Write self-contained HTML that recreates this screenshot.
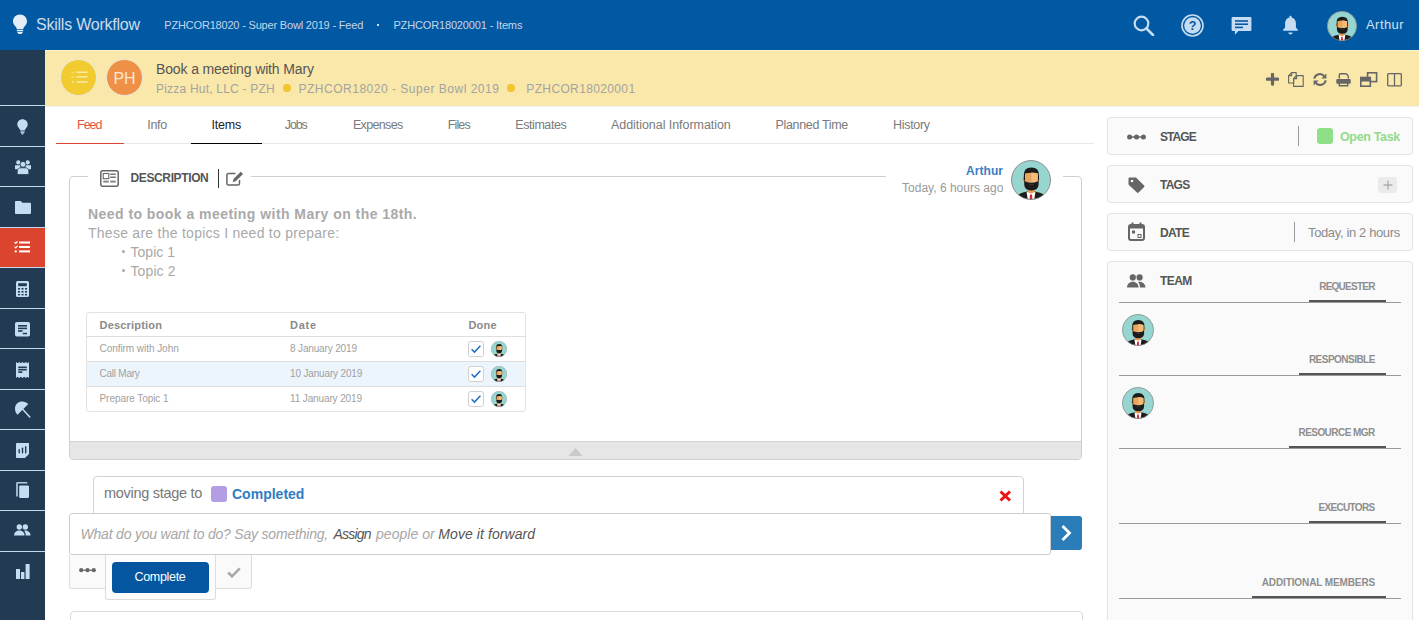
<!DOCTYPE html><html><head><meta charset="utf-8">
<style>
*{box-sizing:border-box;margin:0;padding:0}
html,body{width:1419px;height:620px;overflow:hidden;background:#fff;font-family:"Liberation Sans",sans-serif;position:relative}
.a{position:absolute;white-space:nowrap}
#top{left:0;top:0;width:1419px;height:50px;background:#0259a3}
#side{left:0;top:50px;width:45px;height:570px;background:#223b53}
.sep{position:absolute;left:0;width:45px;height:1px;background:#c3d9ee}
.sicon{position:absolute;left:0;width:45px;display:flex;align-items:center;justify-content:center}
#band{left:45px;top:50px;width:1374px;height:56px;background:#f9e8a9}
.tab{position:absolute;top:119.2px;font-size:12.5px;line-height:12.5px;color:#7a7a7a;white-space:nowrap}
.rbox{position:absolute;left:1107px;width:306px;background:#fafafa;border:1px solid #e3e3e3;border-radius:3px}
.lbl{position:absolute;font-size:12px;font-weight:bold;color:#555;white-space:nowrap}
.tl{position:absolute;font-weight:bold;color:#8e8e8e;white-space:nowrap}
</style></head><body>

<svg width="0" height="0" style="position:absolute">
<defs>
<symbol id="av" viewBox="0 0 100 100">
<clipPath id="avc"><circle cx="50" cy="50" r="49"></circle></clipPath>
<circle cx="50" cy="50" r="49" fill="#97d6d0"></circle>
<g clip-path="url(#avc)">
<path d="M12 100 Q14 86 28 82 L40 79 L60 79 L72 82 Q86 86 88 100 Z" fill="#1c1c1c"></path>
<path d="M39 80 L61 80 L58 100 L42 100 Z" fill="#fff"></path>
<path d="M47.5 86 L52.5 86 L53.5 100 L46.5 100 Z" fill="#d4283a"></path>
<path d="M41 68 L59 68 L59 80 Q50 86 41 80 Z" fill="#e29a55"></path>
<ellipse cx="32" cy="48" rx="3.2" ry="5.5" fill="#e49e5a"></ellipse>
<ellipse cx="70" cy="48" rx="3.2" ry="5.5" fill="#f0b26e"></ellipse>
<path d="M32 40 Q31 19 51 19 Q71 19 70 40 L70 50 L32 50 Z" fill="#1c1c1c"></path>
<path d="M35 34 Q51 30 67 34 L67 56 L35 56 Z" fill="#eba65e"></path>
<path d="M51 31.5 Q59 32 67 34 L67 56 L51 56 Z" fill="#f5bb78"></path>
<path d="M33 48 L36 54 Q51 60 66 54 L69 48 L69 62 Q68 76 51 76 Q34 76 33 62 Z" fill="#1c1c1c"></path>
<path d="M45 62 Q51 59.5 57 62" stroke="#6b4a2c" stroke-width="1.5" fill="none"></path>
</g>
<circle cx="50" cy="50" r="48.6" fill="none" stroke="#8a8a8a" stroke-width="2.3"></circle>
</symbol>
</defs>
</svg>

<!-- TOP BAR -->
<div id="top" class="a"></div>
<svg class="a" style="left:12px;top:14px" width="16" height="20" viewBox="0 0 16 20"><path d="M8 0.5C3.8 0.5 1 3.6 1 7.2c0 2.5 1.3 4 2.5 5.3.8.9 1.2 1.8 1.3 2.7h6.4c.1-.9.5-1.8 1.3-2.7 1.2-1.3 2.5-2.8 2.5-5.3C15 3.6 12.2.5 8 .5z" fill="#e3edf7"></path><rect x="4.8" y="16" width="6.4" height="1.3" fill="#e3edf7"></rect><path d="M5 18h6l-1.5 2h-3z" fill="#e3edf7"></path></svg>
<div class="a" style="left: 36px; top: 16.9px; font-size: 16px; line-height: 16px; color: rgb(205, 220, 236); letter-spacing: -0.234px;">Skills Workflow</div>
<div class="a" style="left: 164.3px; top: 19.9px; font-size: 11px; line-height: 11px; color: rgb(196, 214, 233); letter-spacing: -0.184px;">PZHCOR18020 - Super Bowl 2019 - Feed</div>
<div class="a" style="left:376.5px;top:24px;width:2px;height:2px;background:#cfdeed"></div>
<div class="a" style="left: 393.4px; top: 19.9px; font-size: 11px; line-height: 11px; color: rgb(196, 214, 233); letter-spacing: -0.146px;">PZHCOR18020001 - Items</div>
<!-- top right icons -->
<svg class="a" style="left:1133px;top:15px" width="22" height="21" viewBox="0 0 22 21"><circle cx="8.5" cy="8.5" r="6.8" fill="none" stroke="#c6dcf2" stroke-width="2.2"></circle><path d="M13.5 13.5L20 20" stroke="#c6dcf2" stroke-width="2.6" stroke-linecap="round"></path></svg>
<svg class="a" style="left:1181px;top:14px" width="23" height="23" viewBox="0 0 23 23"><circle cx="11.5" cy="11.5" r="10.5" fill="none" stroke="#c6dcf2" stroke-width="1.6"></circle><circle cx="11.5" cy="11.5" r="8.3" fill="#c6dcf2"></circle><text x="11.5" y="16" font-family="Liberation Sans" font-weight="bold" font-size="12.5" fill="#0558a2" text-anchor="middle">?</text></svg>
<svg class="a" style="left:1231px;top:16px" width="21" height="20" viewBox="0 0 21 20"><path d="M1.5 1h18c.5 0 .9.4.9.9v12.2c0 .5-.4.9-.9.9H7.5l-3.6 3.8V15H1.5c-.5 0-.9-.4-.9-.9V1.9c0-.5.4-.9.9-.9z" fill="#c6dcf2"></path><rect x="4" y="4.2" width="13" height="1.6" fill="#0558a2"></rect><rect x="4" y="7.4" width="13" height="1.6" fill="#0558a2"></rect><rect x="4" y="10.6" width="8" height="1.6" fill="#0558a2"></rect></svg>
<svg class="a" style="left:1282px;top:15px" width="17" height="20" viewBox="0 0 17 20"><path d="M8.5 .8c.7 0 1.1.5 1.1 1.1v.6c2.6.6 4.3 2.8 4.3 5.6v4.5l2 2.2v1H1.1v-1l2-2.2V8.1c0-2.8 1.7-5 4.3-5.6v-.6C7.4 1.3 7.8.8 8.5.8z" fill="#c6dcf2"></path><path d="M6.3 17.6h4.4c0 1.1-1 1.8-2.2 1.8s-2.2-.7-2.2-1.8z" fill="#c6dcf2"></path></svg>
<svg class="a" style="left:1327px;top:11px" width="30" height="30"><use href="#av"></use></svg>
<div class="a" style="left: 1366px; top: 18px; font-size: 13px; line-height: 13px; color: rgb(211, 225, 239); letter-spacing: 0.439px;">Arthur</div>

<!-- SIDEBAR -->
<div id="side" class="a"></div>
<div class="a" style="left:0;top:227px;width:45px;height:40px;background:#db442e"></div>
<div class="sep" style="top:105px"></div>
<div class="sep" style="top:145.5px"></div>
<div class="sep" style="top:186px"></div>
<div class="sep" style="top:226.5px"></div>
<div class="sep" style="top:267px"></div>
<div class="sep" style="top:307.5px"></div>
<div class="sep" style="top:348px"></div>
<div class="sep" style="top:388.5px"></div>
<div class="sep" style="top:429px"></div>
<div class="sep" style="top:469.5px"></div>
<div class="sep" style="top:510px"></div>
<div class="sep" style="top:550.5px"></div>

<div id="band" class="a"></div>
<div class="a" style="left:45px;top:50px;width:1374px;height:1px;background:#fdf3cf"></div>
<div class="a" style="left:45px;top:106px;width:1374px;height:1px;background:#eef0f3"></div>

<!-- SIDEBAR ICONS -->
<svg class="a" style="left:17px;top:119px" width="11" height="16" viewBox="0 0 11 16"><path d="M5.5 .3C2.6.3.3 2.5.3 5.3c0 1.9 1 3.1 1.9 4.1.6.7.9 1.4 1 2.1h4.6c.1-.7.4-1.4 1-2.1.9-1 1.9-2.2 1.9-4.1C10.7 2.5 8.4.3 5.5.3z" fill="#c6dcf2"></path><path d="M3.3 12.2h4.4l-.3 1.6-1.9 2.1-1.9-2.1z" fill="#a9c3dc"></path></svg>
<svg class="a" style="left:15px;top:160px" width="16" height="15" viewBox="0 0 16 15"><circle cx="3.3" cy="2.4" r="2.1" fill="#c6dcf2"></circle><circle cx="12.7" cy="2.4" r="2.1" fill="#c6dcf2"></circle><path d="M0 5.2h5.2l.4 4.1H0z" fill="#c6dcf2"></path><path d="M10.4 5.2H16v4.1h-5.6z" fill="#c6dcf2"></path><circle cx="8" cy="4.3" r="2.9" fill="#c6dcf2" stroke="#223b53" stroke-width=".8"></circle><path d="M2.2 14.5v-3.5c0-1.9 1.6-3.2 3.2-3.2h5.2c1.6 0 3.2 1.3 3.2 3.2v3.5z" fill="#c6dcf2" stroke="#223b53" stroke-width=".8"></path></svg>
<svg class="a" style="left:15px;top:201px" width="16" height="13" viewBox="0 0 16 13"><path d="M.8 0h5l1.5 1.8h7.8c.5 0 .9.4.9.9v9.4c0 .5-.4.9-.9.9H.8c-.5 0-.8-.4-.8-.9V.9C0 .4.3 0 .8 0z" fill="#c6dcf2"></path></svg>
<svg class="a" style="left:14px;top:241px" width="16" height="12" viewBox="0 0 16 12"><path d="M.5 1.2l1.2 1.2L3.6.3" stroke="#fff" stroke-width="1.1" fill="none"></path><path d="M.5 5.7l1.2 1.2 1.9-2.1" stroke="#fff" stroke-width="1.1" fill="none"></path><rect x=".7" y="9.4" width="2" height="2" fill="#fff"></rect><rect x="5" y=".5" width="11" height="2" fill="#fff"></rect><rect x="5" y="5" width="11" height="2" fill="#fff"></rect><rect x="5" y="9.4" width="11" height="2" fill="#fff"></rect></svg>
<svg class="a" style="left:16px;top:281px" width="13" height="16" viewBox="0 0 13 16"><rect x="0" y="0" width="13" height="16" rx="1.5" fill="#c6dcf2"></rect><rect x="2.2" y="2.2" width="8.6" height="3" fill="#223b53"></rect><g fill="#223b53"><rect x="2" y="7" width="2" height="1.6"></rect><rect x="5.5" y="7" width="2" height="1.6"></rect><rect x="9" y="7" width="2" height="1.6"></rect><rect x="2" y="10" width="2" height="1.6"></rect><rect x="5.5" y="10" width="2" height="1.6"></rect><rect x="9" y="10" width="2" height="1.6"></rect><rect x="2" y="13" width="2" height="1.4"></rect><rect x="5.5" y="13" width="2" height="1.4"></rect><rect x="9" y="13" width="2" height="1.4"></rect></g></svg>
<svg class="a" style="left:15px;top:322px" width="15" height="15" viewBox="0 0 15 15"><rect width="15" height="14.5" rx="1.8" fill="#c6dcf2"></rect><rect x="3" y="3" width="9" height="1.6" fill="#223b53"></rect><rect x="3" y="5.6" width="9" height="1.6" fill="#223b53"></rect><rect x="3" y="8.2" width="4.5" height="1.6" fill="#223b53"></rect><rect x="7.8" y="10.8" width="4.2" height="1.5" fill="#223b53"></rect></svg>
<svg class="a" style="left:16px;top:362px" width="13" height="16" viewBox="0 0 13 16"><path d="M0 0l1.6 1.2L3.2 0l1.6 1.2L6.5 0l1.6 1.2L9.8 0l1.6 1.2L13 0v16l-1.6-1.2L9.8 16l-1.6-1.2L6.5 16l-1.6-1.2L3.2 16l-1.6-1.2L0 16z" fill="#c6dcf2"></path><rect x="2.2" y="4.5" width="8.6" height="1.6" fill="#223b53"></rect><rect x="2.2" y="6.9" width="8.6" height="1.6" fill="#223b53"></rect><rect x="2.2" y="9.3" width="4.2" height="1.6" fill="#223b53"></rect></svg>
<svg class="a" style="left:14px;top:400px" width="18" height="19" viewBox="0 0 18 19"><path d="M3.5 14.8C.3 11.5.2 6 3.2 3.3 6.2.6 11.3.8 14.3 4.1z" fill="#c6dcf2"></path><path d="M8.9 9.6l6.9 7.4" stroke="#c6dcf2" stroke-width="1.5" stroke-linecap="round"></path></svg>
<svg class="a" style="left:16px;top:443px" width="13" height="15" viewBox="0 0 13 15"><path d="M.8 0h12.2v11L9 15H.8c-.5 0-.8-.4-.8-.8V.8C0 .4.3 0 .8 0z" fill="#c6dcf2"></path><rect x="2.5" y="6" width="1.4" height="4.5" rx=".7" fill="#223b53"></rect><rect x="5.8" y="4.5" width="1.4" height="6" rx=".7" fill="#223b53"></rect><rect x="9" y="3" width="1.4" height="7.5" rx=".7" fill="#223b53"></rect></svg>
<svg class="a" style="left:16px;top:482px" width="13" height="16" viewBox="0 0 13 16"><path d="M1 14.5V1.5C1 1 1.3.7 1.8.7h9.5" stroke="#b5cbe1" stroke-width="1.7" fill="none"></path><rect x="3.2" y="3.4" width="9.8" height="12.5" rx="1.2" fill="#c6dcf2"></rect></svg>
<svg class="a" style="left:14px;top:524px" width="17" height="12" viewBox="0 0 17 12"><circle cx="5.3" cy="3" r="2.7" fill="#c6dcf2"></circle><circle cx="11.3" cy="3" r="2.7" fill="#c6dcf2"></circle><path d="M0 11.5c0-3 2.4-5 5.3-5s5.3 2 5.3 5z" fill="#c6dcf2"></path><path d="M11 6.5c3 0 5.6 2 5.6 5h-4.8c0-2-.5-3.5-1.6-4.5z" fill="#c6dcf2"></path></svg>
<svg class="a" style="left:16px;top:564px" width="14" height="15" viewBox="0 0 14 15"><rect x="0" y="5" width="4" height="10" fill="#c6dcf2"></rect><rect x="5" y="8" width="3.4" height="7" fill="#c6dcf2"></rect><rect x="9.6" y="0" width="4" height="15" fill="#c6dcf2"></rect></svg>

<!-- BAND -->
<div class="a" style="left:60px;top:59px;width:37px;height:37px;border-radius:50%;background:#f2cb31;border:1.5px solid #ece9d8"></div>
<svg class="a" style="left:70.5px;top:71px" width="18" height="12" viewBox="0 0 18 12"><path d="M.6 1.2l1 1 1.6-1.8" stroke="#fbeaa8" stroke-width="1" fill="none"></path><path d="M.6 5.8l1 1 1.6-1.8" stroke="#fbeaa8" stroke-width="1" fill="none"></path><rect x=".9" y="10" width="1.6" height="1.6" fill="#fbeaa8"></rect><rect x="5.5" y=".5" width="11" height="1.5" fill="#fbeaa8"></rect><rect x="5.5" y="5.1" width="11" height="1.5" fill="#fbeaa8"></rect><rect x="5.5" y="10.2" width="11" height="1.5" fill="#fbeaa8"></rect></svg>
<div class="a" style="left:106px;top:59px;width:37px;height:37px;border-radius:50%;background:#ee9147;border:1.5px solid #ece9d8"></div>
<div class="a" style="left:106px;top:70.5px;width:36px;text-align:center;font-size:16px;line-height:16px;color:#fde6d0;padding-left:1px">PH</div>
<div class="a" style="left: 156px; top: 62px; font-size: 14px; line-height: 14px; color: rgb(85, 85, 85); letter-spacing: -0.134px;">Book a meeting with Mary</div>
<div class="a" style="left: 156px; top: 82.6px; font-size: 12px; line-height: 12px; color: rgb(163, 163, 163); letter-spacing: 0.21px;">Pizza Hut, LLC - PZH</div>
<div class="a" style="left:282.6px;top:84px;width:8px;height:8px;border-radius:50%;background:#f2c52e"></div>
<div class="a" style="left: 298.5px; top: 82.6px; font-size: 12px; line-height: 12px; color: rgb(163, 163, 163); letter-spacing: 0.511px;">PZHCOR18020 - Super Bowl 2019</div>
<div class="a" style="left:506.8px;top:84px;width:8px;height:8px;border-radius:50%;background:#f2c52e"></div>
<div class="a" style="left: 526.3px; top: 82.6px; font-size: 12px; line-height: 12px; color: rgb(163, 163, 163); letter-spacing: 0.364px;">PZHCOR18020001</div>
<!-- band right icons -->
<svg class="a" style="left:1266px;top:73px" width="13" height="12.5" viewBox="0 0 13 12.5"><path d="M6.5 1.2v10M1.3 6.2h10.4" stroke="#666" stroke-width="3.2" stroke-linecap="round"></path></svg>
<svg class="a" style="left:1287.5px;top:72px" width="16" height="15" viewBox="0 0 16 15"><path d="M3.6.6h4.6v3.3L5.6 6.6v4.4H.6V3.6z" fill="none" stroke="#666" stroke-width="1.1" stroke-linejoin="round"></path><path d="M.6 3.6h3V.6" fill="none" stroke="#666" stroke-width="1.1"></path><path d="M8.6 3.6h6.6v10.8H5.6V6.6z" fill="none" stroke="#666" stroke-width="1.1" stroke-linejoin="round"></path><path d="M5.6 6.6h3v-3" fill="none" stroke="#666" stroke-width="1.1"></path></svg>
<svg class="a" style="left:1312.5px;top:73px" width="14" height="13" viewBox="0 0 14 13"><path d="M1.3 5.6A5.6 5.6 0 0 1 11.2 3.2" fill="none" stroke="#666" stroke-width="2"></path><path d="M13.4.6v5h-5z" fill="#666"></path><path d="M12.7 7.4A5.6 5.6 0 0 1 2.8 9.8" fill="none" stroke="#666" stroke-width="2"></path><path d="M.6 12.4v-5h5z" fill="#666"></path></svg>
<svg class="a" style="left:1335.5px;top:72.5px" width="15" height="14" viewBox="0 0 15 14"><path d="M3.3 5.5V1.8C3.3 1.1 3.8.7 4.4.7h4.8c.7 0 1.2.2 1.6.6l.9.9c.4.4.6.9.6 1.5V5.5" fill="none" stroke="#666" stroke-width="1.4"></path><rect x=".3" y="6" width="14.4" height="4.8" rx="1" fill="#666"></rect><path d="M3.3 10v2.8h8.4V10" fill="none" stroke="#666" stroke-width="1.4"></path></svg>
<svg class="a" style="left:1360px;top:72px" width="17.5" height="15" viewBox="0 0 17.5 15"><rect x="7.6" y=".8" width="9" height="8.8" fill="none" stroke="#666" stroke-width="1.6"></rect><rect x=".8" y="5.5" width="9.5" height="8.7" fill="#f9e8a9" stroke="#666" stroke-width="1.6"></rect><rect x=".8" y="5.5" width="9.5" height="4" fill="#666"></rect></svg>
<svg class="a" style="left:1386.5px;top:73px" width="15" height="13.5" viewBox="0 0 15 13.5"><rect x=".7" y=".7" width="13.6" height="12.1" rx=".8" fill="none" stroke="#666" stroke-width="1.3"></rect><path d="M7.5 1v12" stroke="#666" stroke-width="1.3"></path></svg>

<!-- TABS -->
<div class="a" style="left:56px;top:143px;width:1038px;height:1px;background:#e7e9e9"></div>
<div class="a" style="left:56px;top:143px;width:67.5px;height:1px;background:#dc4530"></div>
<div class="a" style="left:191px;top:143px;width:71px;height:1px;background:#000"></div>
<div class="tab" style="left: 77.1px; color: rgb(224, 85, 63); letter-spacing: -1.033px;">Feed</div>
<div class="tab" style="left: 147.2px; letter-spacing: -0.253px;">Info</div>
<div class="tab" style="left: 211.5px; color: rgb(34, 34, 34); letter-spacing: -0.191px;">Items</div>
<div class="tab" style="left: 284.8px; letter-spacing: -1.135px;">Jobs</div>
<div class="tab" style="left: 352.9px; letter-spacing: -0.658px;">Expenses</div>
<div class="tab" style="left: 447.7px; letter-spacing: -0.852px;">Files</div>
<div class="tab" style="left: 515.3px; letter-spacing: -0.436px;">Estimates</div>
<div class="tab" style="left: 611px; letter-spacing: -0.053px;">Additional Information</div>
<div class="tab" style="left: 775.6px; letter-spacing: -0.349px;">Planned Time</div>
<div class="tab" style="left: 893px; letter-spacing: -0.301px;">History</div>

<!-- DESCRIPTION FRAME -->
<div class="a" style="left:69px;top:176px;width:1013px;height:284px;border:1px solid #cfcfcf;border-radius:4px;background:#fff"></div>
<div class="a" style="left:70px;top:441px;width:1011px;height:18px;background:#e6e6e6;border-top:1px solid #d3d3d3;border-radius:0 0 3px 3px"></div>
<svg class="a" style="left:568px;top:447.5px" width="15" height="8.5" viewBox="0 0 15 8.5"><path d="M7.5 0L15 8.5H0z" fill="#c9c9c9"></path></svg>
<div class="a" style="left:88px;top:170px;width:163px;height:14px;background:#fff"></div>
<div class="a" style="left:886px;top:170px;width:177px;height:14px;background:#fff"></div>
<svg class="a" style="left:99.5px;top:170px" width="19" height="17" viewBox="0 0 19 17"><rect x=".8" y=".8" width="17.4" height="15.4" rx="2" fill="none" stroke="#666" stroke-width="1.5"></rect><rect x="3.2" y="3.5" width="5.6" height="5.2" fill="none" stroke="#666" stroke-width="1.1"></rect><rect x="3.2" y="10.6" width="5.6" height="2" fill="#888"></rect><rect x="10.2" y="3.5" width="5.6" height="1.5" fill="#777"></rect><rect x="10.2" y="6.5" width="5.6" height="1.5" fill="#777"></rect><rect x="10.2" y="10.6" width="5.6" height="2" fill="#888"></rect></svg>
<div class="a" style="left: 130.5px; top: 172px; font-size: 12px; line-height: 12px; font-weight: bold; color: rgb(85, 85, 85); letter-spacing: -0.372px;">DESCRIPTION</div>
<div class="a" style="left:218px;top:169px;width:1.3px;height:19px;background:#333"></div>
<svg class="a" style="left:226px;top:170.5px" width="18" height="15" viewBox="0 0 18 15"><path d="M9.5 2.5H2.5c-.9 0-1.6.7-1.6 1.6v8.4c0 .9.7 1.6 1.6 1.6h9.4c.9 0 1.6-.7 1.6-1.6V9" fill="none" stroke="#666" stroke-width="1.5"></path><path d="M14.8.8l2.2 2.2-7.3 7.3-3 .8.8-3z" fill="#666"></path></svg>
<div class="a" style="left: 966px; top: 164.8px; font-size: 12px; line-height: 12px; font-weight: bold; color: rgb(61, 125, 192); letter-spacing: 0.066px;">Arthur</div>
<div class="a" style="left: 902px; top: 181.5px; font-size: 12px; line-height: 12px; color: rgb(154, 154, 154); letter-spacing: 0.013px;">Today, 6 hours ago</div>
<svg class="a" style="left:1011px;top:160px" width="40" height="40"><use href="#av"></use></svg>
<div class="a" style="left: 88px; top: 207.1px; font-size: 14px; line-height: 14px; font-weight: bold; color: rgb(169, 169, 169); letter-spacing: 0.452px;">Need to book a meeting with Mary on the 18th.</div>
<div class="a" style="left: 88px; top: 226.1px; font-size: 14px; line-height: 14px; color: rgb(169, 169, 169); letter-spacing: 0.261px;">These are the topics I need to prepare:</div>
<div class="a" style="left:121.5px;top:250px;width:3px;height:3px;border-radius:50%;background:#aaa"></div>
<div class="a" style="left: 130.5px; top: 245.1px; font-size: 14px; line-height: 14px; color: rgb(169, 169, 169); letter-spacing: 0.023px;">Topic 1</div>
<div class="a" style="left:121.5px;top:269px;width:3px;height:3px;border-radius:50%;background:#aaa"></div>
<div class="a" style="left: 130.5px; top: 264.1px; font-size: 14px; line-height: 14px; color: rgb(169, 169, 169); letter-spacing: 0.107px;">Topic 2</div>

<!-- TABLE -->
<div class="a" style="left:86px;top:312px;width:440px;height:100px;border:1px solid #e2e2e2;border-radius:3px;background:#fff"></div>
<div class="a" style="left:87px;top:336px;width:438px;height:1px;background:#dedede"></div>
<div class="a" style="left:87px;top:361px;width:438px;height:26px;background:#edf5fc;border-top:1px solid #dedede;border-bottom:1px solid #dedede"></div>
<div class="a" style="left: 99.5px; top: 319.9px; font-size: 11px; line-height: 11px; font-weight: bold; color: rgb(138, 138, 138); letter-spacing: 0.188px;">Description</div>
<div class="a" style="left: 290px; top: 319.9px; font-size: 11px; line-height: 11px; font-weight: bold; color: rgb(138, 138, 138); letter-spacing: 0.719px;">Date</div>
<div class="a" style="left: 468.4px; top: 319.9px; font-size: 11px; line-height: 11px; font-weight: bold; color: rgb(138, 138, 138); letter-spacing: 0.233px;">Done</div>
<div class="a" style="left: 99.5px; top: 343.9px; font-size: 10px; line-height: 10px; color: rgb(160, 160, 160); letter-spacing: -0.052px;">Confirm with John</div>
<div class="a" style="left: 290px; top: 343.9px; font-size: 10px; line-height: 10px; color: rgb(160, 160, 160); letter-spacing: -0.15px;">8 January 2019</div>
<svg class="a" style="left:468px;top:341px" width="16" height="16" viewBox="0 0 16 16"><rect x=".5" y=".5" width="15" height="15" rx="2" fill="#fff" stroke="#cfcfcf"></rect><path d="M3.6 8.2l2.9 2.9 5.9-6.4" fill="none" stroke="#1e6fc4" stroke-width="1.5"></path></svg>
<svg class="a" style="left:490.5px;top:341px" width="16" height="16"><use href="#av"></use></svg>
<div class="a" style="left: 99.5px; top: 368.6px; font-size: 10px; line-height: 10px; color: rgb(160, 160, 160); letter-spacing: -0.242px;">Call Mary</div>
<div class="a" style="left: 290px; top: 368.6px; font-size: 10px; line-height: 10px; color: rgb(160, 160, 160); letter-spacing: -0.158px;">10 January 2019</div>
<svg class="a" style="left:468px;top:366px" width="16" height="16" viewBox="0 0 16 16"><rect x=".5" y=".5" width="15" height="15" rx="2" fill="#fff" stroke="#cfcfcf"></rect><path d="M3.6 8.2l2.9 2.9 5.9-6.4" fill="none" stroke="#1e6fc4" stroke-width="1.5"></path></svg>
<svg class="a" style="left:490.5px;top:366px" width="16" height="16"><use href="#av"></use></svg>
<div class="a" style="left: 99.5px; top: 393.5px; font-size: 10px; line-height: 10px; color: rgb(160, 160, 160); letter-spacing: -0.054px;">Prepare Topic 1</div>
<div class="a" style="left: 290px; top: 393.5px; font-size: 10px; line-height: 10px; color: rgb(160, 160, 160); letter-spacing: -0.126px;">11 January 2019</div>
<svg class="a" style="left:468px;top:391px" width="16" height="16" viewBox="0 0 16 16"><rect x=".5" y=".5" width="15" height="15" rx="2" fill="#fff" stroke="#cfcfcf"></rect><path d="M3.6 8.2l2.9 2.9 5.9-6.4" fill="none" stroke="#1e6fc4" stroke-width="1.5"></path></svg>
<svg class="a" style="left:490.5px;top:391px" width="16" height="16"><use href="#av"></use></svg>

<!-- MOVING STAGE -->
<div class="a" style="left:93px;top:476px;width:931px;height:50px;border:1px solid #d2d2d2;border-radius:4px;background:#fff"></div>
<div class="a" style="left: 104px; top: 486.3px; font-size: 14.5px; line-height: 14.5px; color: rgb(119, 119, 119); letter-spacing: -0.284px;">moving stage to</div>
<div class="a" style="left:211px;top:486px;width:16px;height:16px;border-radius:3px;background:#b39de3"></div>
<div class="a" style="left: 232px; top: 486.9px; font-size: 14px; line-height: 14px; font-weight: bold; color: rgb(47, 124, 193); letter-spacing: 0.007px;">Completed</div>
<svg class="a" style="left:999px;top:489.5px" width="12.5" height="12" viewBox="0 0 12.5 12"><path d="M1.5 1.5l9.5 9M11 1.5l-9.5 9" stroke="#f01212" stroke-width="3"></path></svg>

<!-- INPUT -->
<div class="a" style="left:69px;top:513px;width:982px;height:42px;border:1px solid #cdcdcd;border-radius:3px;background:#fff"></div>
<div class="a" style="left:1051px;top:515.5px;width:30.5px;height:34.5px;background:#2b7dba;border-radius:0 3px 3px 0"></div>
<svg class="a" style="left:1060px;top:524px" width="12" height="18" viewBox="0 0 12 18"><path d="M2.5 2l7 7-7 7" fill="none" stroke="#fff" stroke-width="2.8"></path></svg>
<div class="a" style="left: 80.5px; top: 526.6px; font-size: 14px; line-height: 14px; font-style: italic; color: rgb(166, 166, 166); letter-spacing: -0.204px;">What do you want to do? Say something,</div>
<div class="a" style="left: 333.5px; top: 526.6px; font-size: 14px; line-height: 14px; font-style: italic; color: rgb(85, 85, 85); letter-spacing: -0.806px;">Assign</div>
<div class="a" style="left: 376px; top: 526.6px; font-size: 14px; line-height: 14px; font-style: italic; color: rgb(166, 166, 166); letter-spacing: 0.039px;">people or</div>
<div class="a" style="left: 438.3px; top: 526.6px; font-size: 14px; line-height: 14px; font-style: italic; color: rgb(85, 85, 85); letter-spacing: 0.078px;">Move it forward</div>

<!-- BUTTONS -->
<div class="a" style="left:69px;top:555px;width:183px;height:34px;border:1px solid #dcdcdc;border-top:none;border-radius:0 0 3px 3px;background:#fafafa"></div>
<svg class="a" style="left:79px;top:568px" width="17" height="5" viewBox="0 0 17 5"><circle cx="2.2" cy="2.2" r="2.1" fill="#666"></circle><circle cx="8.5" cy="2.2" r="2.1" fill="#666"></circle><circle cx="14.8" cy="2.2" r="2.1" fill="#666"></circle><rect x="2" y="1.6" width="13" height="1.2" fill="#666"></rect></svg>
<div class="a" style="left:105px;top:555px;width:111px;height:45px;border:1px solid #dcdcdc;border-top:none;border-radius:0 0 3px 3px;background:#fdfdfd"></div>
<div class="a" style="left:112px;top:562px;width:97px;height:31px;border-radius:4px;background:#03569f"></div>
<div class="a" style="left: 134.5px; top: 571.2px; font-size: 12.5px; line-height: 12.5px; color: rgb(255, 255, 255); letter-spacing: -0.314px;">Complete</div>
<svg class="a" style="left:226.5px;top:566.5px" width="14" height="11" viewBox="0 0 14 11"><path d="M1.2 5.5l3.8 3.8 7.8-8" fill="none" stroke="#a8a8a8" stroke-width="2.6"></path></svg>

<!-- BOTTOM BOX -->
<div class="a" style="left:70px;top:611px;width:1013px;height:30px;border:1px solid #dadada;border-radius:4px;background:#fff"></div>

<!-- RIGHT PANEL -->
<div class="rbox" style="top:117px;height:38px"></div>
<div class="rbox" style="top:165px;height:38px"></div>
<div class="rbox" style="top:213px;height:38px"></div>
<div class="rbox" style="top:261px;height:380px"></div>
<svg class="a" style="left:1126.5px;top:134px" width="19" height="6" viewBox="0 0 19 6"><circle cx="2.6" cy="3" r="2.5" fill="#666"></circle><circle cx="9.5" cy="3" r="2.5" fill="#666"></circle><circle cx="16.4" cy="3" r="2.5" fill="#666"></circle><rect x="2" y="2.3" width="15" height="1.4" fill="#666"></rect></svg>
<div class="lbl" style="left: 1160px; top: 131px; line-height: 12px; letter-spacing: -0.938px;">STAGE</div>
<div class="a" style="left:1298px;top:126px;width:1px;height:20px;background:#999"></div>
<div class="a" style="left:1317px;top:128px;width:16px;height:16px;border-radius:3px;background:#8fdf88"></div>
<div class="lbl" style="left: 1340px; top: 131px; line-height: 12px; font-size: 12.5px; font-weight: bold; color: rgb(146, 217, 140); letter-spacing: -0.348px;">Open Task</div>
<svg class="a" style="left:1127.5px;top:176.5px" width="17" height="16" viewBox="0 0 17 16"><path d="M.5 1.5C.5 1 1 .5 1.5.5h6c.4 0 .8.2 1 .4l7.6 7.6c.5.5.5 1.1 0 1.6l-5.5 5.5c-.5.5-1.1.5-1.6 0L.9 8c-.2-.2-.4-.6-.4-1z" fill="#666"></path><circle cx="4" cy="4" r="1.3" fill="#fafafa"></circle></svg>
<div class="lbl" style="left: 1160px; top: 178.8px; line-height: 12px; letter-spacing: -0.751px;">TAGS</div>
<div class="a" style="left:1378px;top:176.5px;width:19px;height:16.5px;border-radius:3px;background:#ebebeb"></div>
<svg class="a" style="left:1382.5px;top:180px" width="10" height="10" viewBox="0 0 10 10"><path d="M5 .5v9M.5 5h9" stroke="#b0b0b0" stroke-width="1.4"></path></svg>
<svg class="a" style="left:1128px;top:222px" width="17" height="19" viewBox="0 0 17 19"><rect x="1" y="3" width="15" height="15" rx="2" fill="none" stroke="#666" stroke-width="2"></rect><rect x="1" y="3" width="15" height="3.5" fill="#666"></rect><rect x="3.5" y=".5" width="2" height="3.5" fill="#666"></rect><rect x="11.5" y=".5" width="2" height="3.5" fill="#666"></rect><rect x="4" y="8.5" width="3" height="3" fill="#666"></rect><rect x="10" y="12.5" width="3" height="3" fill="none" stroke="#666" stroke-width="1"></rect></svg>
<div class="lbl" style="left: 1160px; top: 227px; line-height: 12px; letter-spacing: -0.694px;">DATE</div>
<div class="a" style="left:1294px;top:222px;width:1px;height:20px;background:#999"></div>
<div class="a" style="left: 1308px; top: 226px; font-size: 13px; line-height: 13px; color: rgb(140, 140, 140); letter-spacing: -0.365px;">Today, in 2 hours</div>
<svg class="a" style="left:1126.5px;top:274px" width="19" height="14" viewBox="0 0 19 14"><circle cx="5.8" cy="3.4" r="3.1" fill="#666"></circle><circle cx="12.6" cy="3.4" r="3.1" fill="#666"></circle><path d="M0 13.5c0-3.5 2.6-5.8 5.8-5.8s5.8 2.3 5.8 5.8z" fill="#666"></path><path d="M12.3 7.7c3.4 0 6.2 2.3 6.2 5.8h-5.5c0-2.2-.6-4-1.9-5.2z" fill="#666"></path></svg>
<div class="lbl" style="left: 1160px; top: 274.8px; line-height: 12px; letter-spacing: -0.6px;">TEAM</div>
<div class="a" style="left:1119px;top:302px;width:282px;height:1px;background:#9a9a9a"></div>
<div class="a" style="left:1309.2px;top:300px;width:76.8px;height:2px;background:#555"></div>
<div class="tl" style="left: 1319.2px; top: 281.9px; font-size: 10px; line-height: 10px; letter-spacing: -0.754px;">REQUESTER</div>
<div class="a" style="left:1119px;top:375px;width:282px;height:1px;background:#9a9a9a"></div>
<div class="a" style="left:1298.9px;top:373px;width:87.1px;height:2px;background:#555"></div>
<div class="tl" style="left: 1308.9px; top: 354.6px; font-size: 10px; line-height: 10px; letter-spacing: -0.519px;">RESPONSIBLE</div>
<div class="a" style="left:1119px;top:448px;width:282px;height:1px;background:#9a9a9a"></div>
<div class="a" style="left:1288.5px;top:446px;width:97.3px;height:2px;background:#555"></div>
<div class="tl" style="left: 1298.5px; top: 427.7px; font-size: 10px; line-height: 10px; letter-spacing: -0.554px;">RESOURCE MGR</div>
<div class="a" style="left:1119px;top:523px;width:282px;height:1px;background:#9a9a9a"></div>
<div class="a" style="left:1308.5px;top:521px;width:77.3px;height:2px;background:#555"></div>
<div class="tl" style="left: 1318.5px; top: 502.8px; font-size: 10px; line-height: 10px; letter-spacing: -0.67px;">EXECUTORS</div>
<div class="a" style="left:1119px;top:598px;width:282px;height:1px;background:#9a9a9a"></div>
<div class="a" style="left:1251.7px;top:596px;width:134.1px;height:2px;background:#555"></div>
<div class="tl" style="left: 1261.7px; top: 577.6px; font-size: 10px; line-height: 10px; letter-spacing: -0.11px;">ADDITIONAL MEMBERS</div>
<svg class="a" style="left:1122px;top:314px" width="32" height="32"><use href="#av"></use></svg>
<svg class="a" style="left:1122px;top:387px" width="32" height="32"><use href="#av"></use></svg>
<!--END-->
<!--REST-->

</body></html>
